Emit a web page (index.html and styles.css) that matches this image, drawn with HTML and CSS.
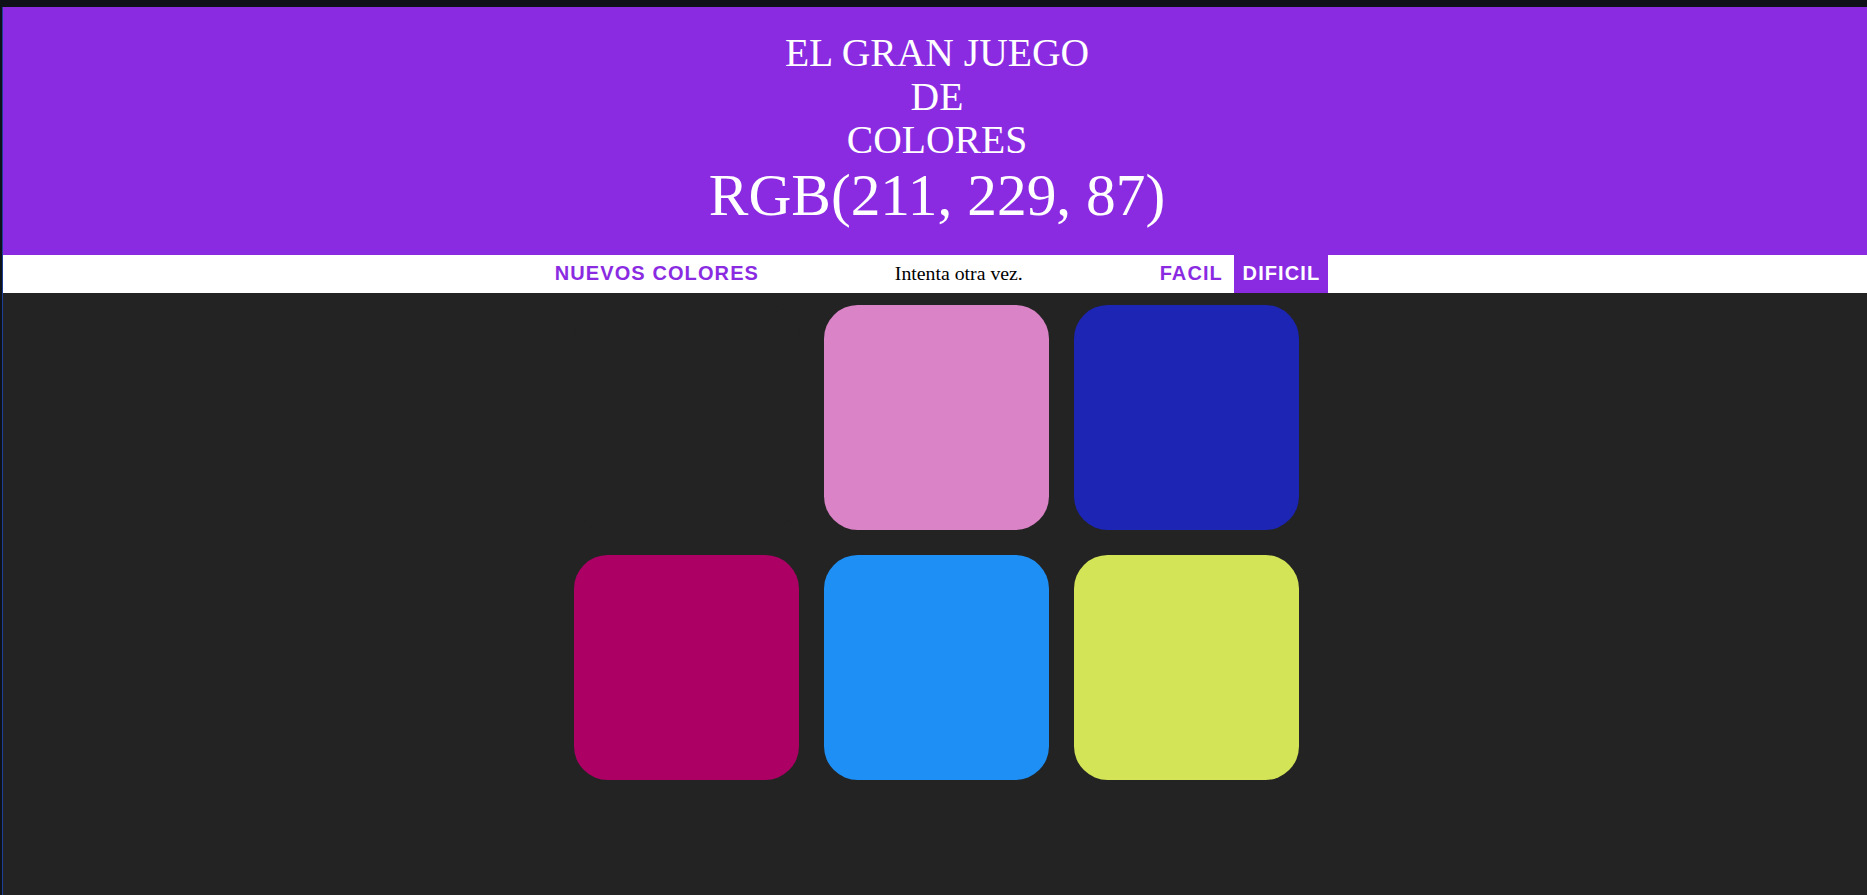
FILE: index.html
```html
<!DOCTYPE html>
<html lang="es">
<head>
    <meta charset="UTF-8">
    <meta name="viewport" content="width=device-width, initial-scale=1.0">
    <title>El Gran Juego de Colores</title>
    <link rel="stylesheet" href="styles.css">
</head>
<body>
    <h1>El Gran Juego<br>de<br>Colores<br><span id="colorDisplay">rgb(211, 229, 87)</span></h1>

    <div id="stripe">
        <button id="reset">Nuevos Colores</button>
        <span id="message">Intenta otra vez.</span>
        <button class="mode facil">Facil</button>
        <button class="mode selected">Dificil</button>
    </div>

    <div id="container">
        <div class="square" style="background-color: #232323;"></div>
        <div class="square" style="background-color: rgb(218, 131, 198);"></div>
        <div class="square" style="background-color: rgb(28, 37, 180);"></div>
        <div class="square" style="background-color: rgb(172, 0, 100);"></div>
        <div class="square" style="background-color: rgb(30, 143, 245);"></div>
        <div class="square" style="background-color: rgb(211, 229, 87);"></div>
    </div>
</body>
</html>
```

FILE: styles.css
```css
html {
    background-color: #0e1117;
    overflow: hidden;
}
body {
    margin: 7px 0 0 2px;
    border-left: 1px solid #1f3f96;
    width: 1868px;
    min-height: calc(100vh - 7px);
    background-color: #232323;
    font-family: "Liberation Serif", "Times New Roman", serif;
    font-size: 19.8px;
}
h1 {
    margin: 0;
    padding: 25px 0 27px;
    background-color: #8a2be2;
    color: white;
    text-align: center;
    text-transform: uppercase;
    font-weight: normal;
    font-size: 39.6px;
    line-height: 1.1;
}
#colorDisplay {
    font-size: 150%;
}
#stripe {
    display: flex;
    justify-content: center;
    align-items: stretch;
    height: 38px;
    background-color: white;
}
button {
    border: none;
    background: none;
    padding: 0 8px 0 9px;
    margin: 0;
    height: 100%;
    font-family: "Liberation Sans", Arial, sans-serif;
    font-size: 20px;
    font-weight: bold;
    letter-spacing: 1.1px;
    text-transform: uppercase;
    color: #8a2be2;
    cursor: pointer;
    outline: none;
    transition: all 0.3s;
}
button:hover,
.selected {
    background-color: #8a2be2;
    color: white;
}
#message {
    display: flex;
    align-items: center;
    justify-content: center;
    width: 20%;
    margin: 0 5px;
    color: black;
}
.facil {
    margin-right: 2.7px;
}
#container {
    display: flex;
    flex-wrap: wrap;
    width: 750px;
    margin: 0 auto;
}
.square {
    width: 30%;
    padding-bottom: 30%;
    margin: 1.66%;
    border-radius: 15%;
    transition: background 0.6s;
}
```
